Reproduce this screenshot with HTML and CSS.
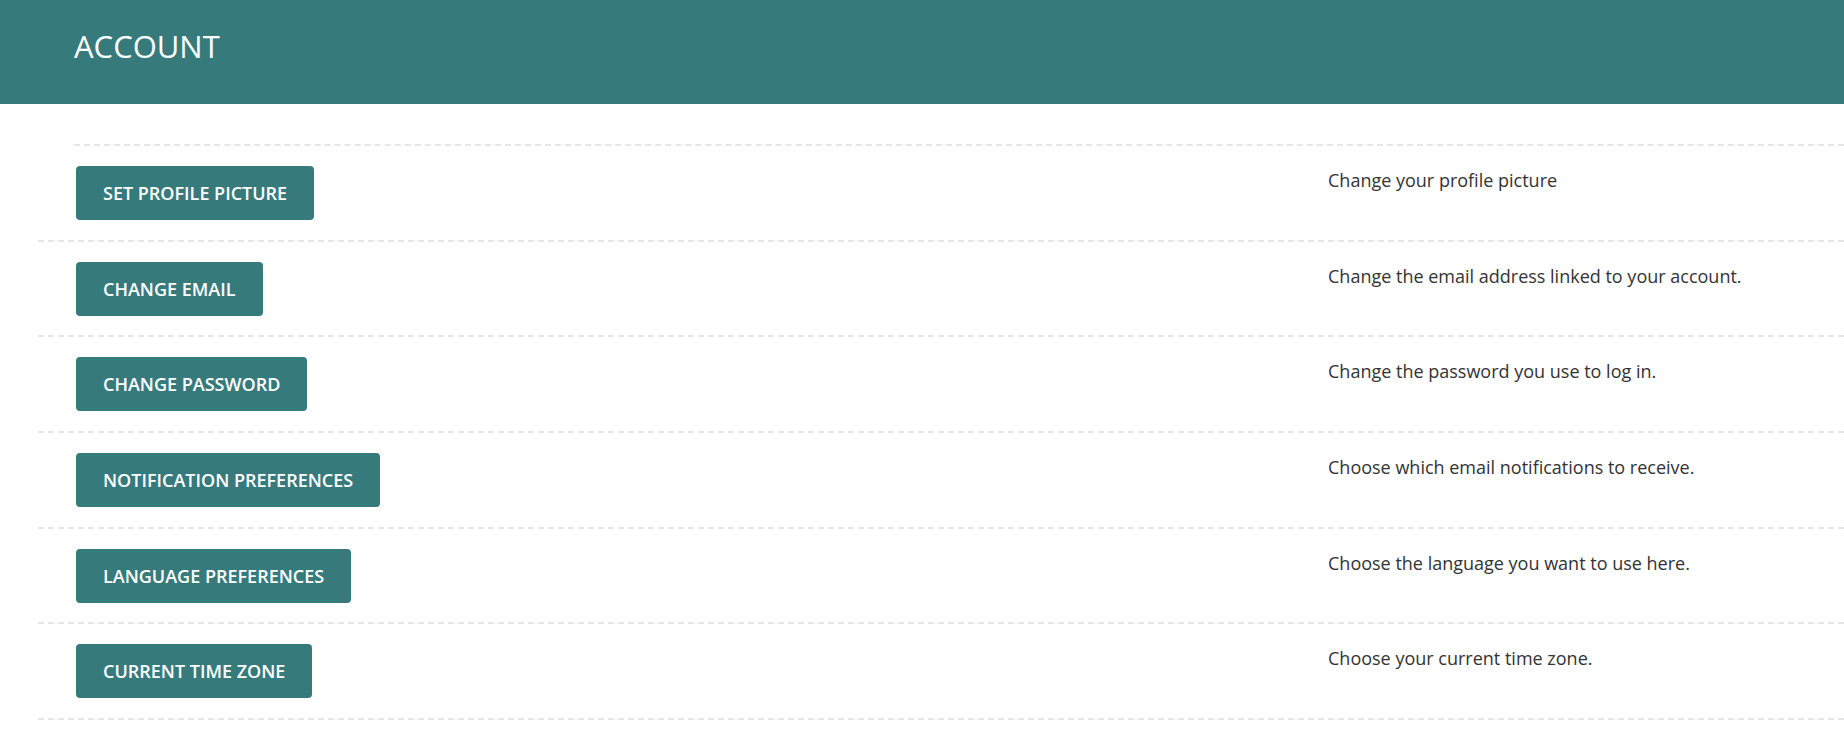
FILE: index.html
```html
<!DOCTYPE html>
<html lang="en">
<head>
<meta charset="utf-8">
<title>Account</title>
<link rel="stylesheet" href="styles.css">
</head>
<body>
<header class="topbar">
  <h1 class="topbar-title">ACCOUNT</h1>
</header>
<main class="settings">
  <div class="settings-top"></div>
  <div class="setting-row">
    <div class="setting-action"><button class="btn">SET PROFILE PICTURE</button></div>
    <div class="setting-desc">Change your profile picture</div>
  </div>
  <div class="setting-row">
    <div class="setting-action"><button class="btn">CHANGE EMAIL</button></div>
    <div class="setting-desc">Change the email address linked to your account.</div>
  </div>
  <div class="setting-row">
    <div class="setting-action"><button class="btn">CHANGE PASSWORD</button></div>
    <div class="setting-desc">Change the password you use to log in.</div>
  </div>
  <div class="setting-row">
    <div class="setting-action"><button class="btn">NOTIFICATION PREFERENCES</button></div>
    <div class="setting-desc">Choose which email notifications to receive.</div>
  </div>
  <div class="setting-row">
    <div class="setting-action"><button class="btn">LANGUAGE PREFERENCES</button></div>
    <div class="setting-desc">Choose the language you want to use here.</div>
  </div>
  <div class="setting-row">
    <div class="setting-action"><button class="btn">CURRENT TIME ZONE</button></div>
    <div class="setting-desc">Choose your current time zone.</div>
  </div>
</main>
</body>
</html>
```
FILE: styles.css
```css
* { box-sizing: border-box; }
html, body { margin: 0; padding: 0; background: #ffffff; }
body {
  font-family: "Open Sans", "Liberation Sans", sans-serif;
  color: #333333;
}
.topbar {
  height: 104px;
  background: #377a7c;
  padding: 25px 0 0 74px;
}
.topbar-title {
  margin: 0;
  font-size: 31px;
  line-height: 42px;
  font-weight: 500;
  color: #ffffff;
}
.settings {
  padding-top: 40px;
}
.settings-top {
  margin-left: 74px;
  border-top: 2px dashed #e6e6e6;
}
.setting-row {
  display: flex;
  align-items: flex-start;
  margin-left: 38px;
  padding: 20px 0 19.67px 0;
  border-bottom: 2px dashed #e6e6e6;
}
.setting-action {
  width: 1290px;
  padding-left: 38px;
  flex: none;
}
.btn {
  display: inline-flex;
  align-items: center;
  height: 54px;
  padding: 0 27px;
  border: none;
  border-radius: 4px;
  background: #377a7c;
  color: #ffffff;
  font-family: "Open Sans", "Liberation Sans", sans-serif;
  font-weight: 600;
  font-size: 18px;
  cursor: pointer;
}
.setting-desc {
  font-size: 18px;
  line-height: 24px;
  padding-top: 2px;
  color: #333333;
}
```
